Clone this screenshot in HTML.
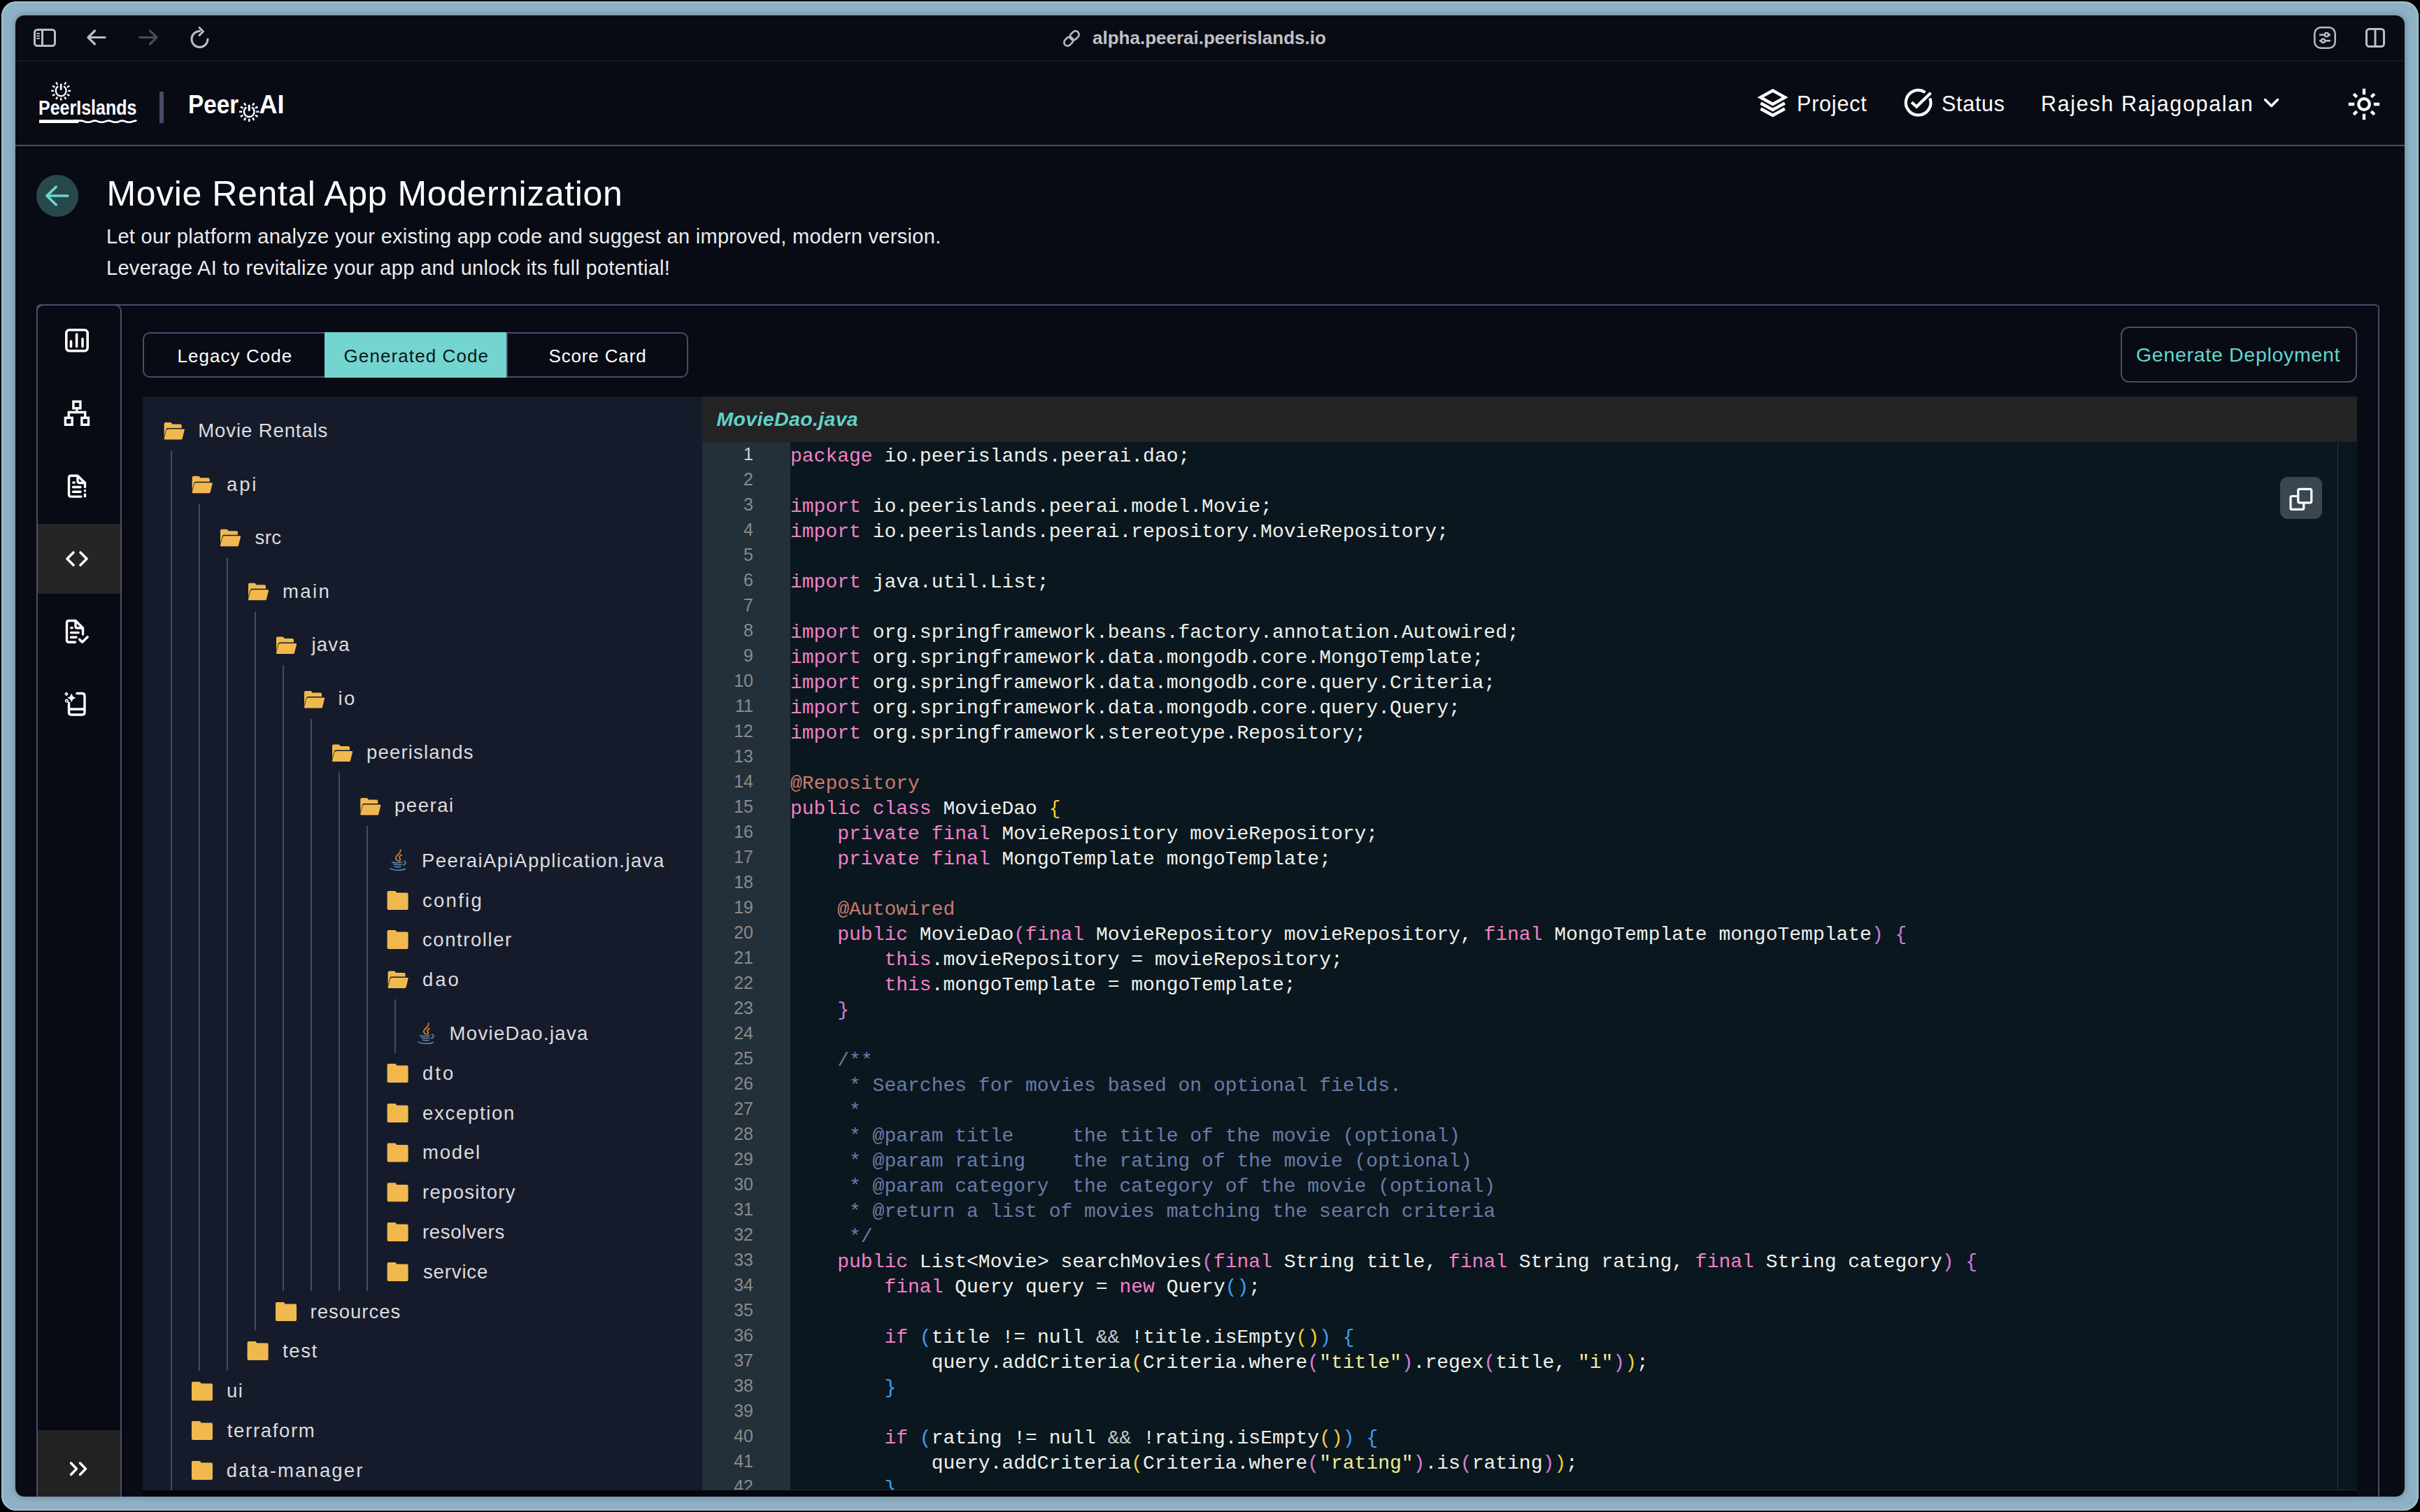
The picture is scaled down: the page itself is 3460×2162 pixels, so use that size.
<!DOCTYPE html>
<html><head><meta charset="utf-8">
<style>
*{margin:0;padding:0;box-sizing:border-box}
html,body{width:3460px;height:2162px;overflow:hidden;background:#000}
body{position:relative;font-family:"Liberation Sans",sans-serif}
.a{position:absolute}
.t{position:absolute;white-space:pre;line-height:1}
#frame{left:2px;top:2px;width:3456px;height:2158px;border-radius:21px;background:#8fb1c5;box-shadow:inset 0 0 0 1.5px rgba(220,240,250,.45)}
#win{left:22px;top:22px;width:3416px;height:2118px;border-radius:13px;background:#080b14;overflow:hidden;box-shadow:0 0 8px 1px rgba(40,60,80,.35)}
svg.ov{position:absolute;left:0;top:0;width:3460px;height:2162px;overflow:visible}
.kw{color:#f47fc8}.an{color:#cc7a6c}.cm{color:#6b7ba8}.st{color:#f0ee94}.q{color:#f0ee9e}.op{color:#c8c8c8}
#code{position:absolute;left:1129px;top:632px;font-family:"Liberation Mono",monospace;font-size:28px;line-height:36px;color:#f0f0ea;white-space:pre}
#gut{position:absolute;left:1004px;top:632px;width:73px;font-family:"Liberation Sans",sans-serif;font-size:25px;line-height:36px;color:#8a8a8a;white-space:pre;text-align:right}
.tr{position:absolute;white-space:pre;line-height:1;font-size:27.5px;color:#dcdcde}
</style></head><body>
<div id="frame" class="a"></div>
<div id="win" class="a">
</div>
<!-- everything positioned in page coordinates; clip container -->
<div class="a" style="left:22px;top:22px;width:3416px;height:2118px;border-radius:13px;overflow:hidden">
<div class="a" style="left:-22px;top:-22px;width:3460px;height:2162px">

<!-- toolbar separator -->
<div class="a" style="left:22px;top:86px;width:3416px;height:2px;background:#151720"></div>
<!-- header bottom border -->
<div class="a" style="left:22px;top:207px;width:3416px;height:2px;background:#4a4d6a"></div>

<!-- URL -->
<div class="t" style="left:1562px;top:41px;font-size:26px;font-weight:bold;color:#c0c0c4">alpha.peerai.peerislands.io</div>

<!-- logo text -->
<div class="t" style="left:55px;top:139px;font-size:29.6px;font-weight:bold;color:#fff;transform:scaleX(0.845);transform-origin:0 0">PeerIslands</div>
<div class="a" style="left:228px;top:131px;width:6px;height:45px;background:#484a68"></div>
<div class="t" style="left:268.5px;top:132.2px;font-size:36px;font-weight:bold;color:#fff;transform:scaleX(0.925);transform-origin:0 0">Peer</div>
<div class="t" style="left:370.5px;top:132.2px;font-size:36px;font-weight:bold;color:#fff">AI</div>

<!-- header right -->
<div class="t" style="left:2569px;top:132.5px;font-size:30.5px;color:#fff;letter-spacing:0.8px">Project</div>
<div class="t" style="left:2776px;top:132.5px;font-size:30.5px;color:#fff;letter-spacing:0.7px">Status</div>
<div class="t" style="left:2918px;top:132.5px;font-size:30.5px;color:#fff;letter-spacing:1.65px">Rajesh Rajagopalan</div>

<!-- title -->
<div class="a" style="left:52px;top:250px;width:60px;height:60px;border-radius:50%;background:#27494c"></div>
<div class="t" style="left:152.5px;top:252px;font-size:50px;color:#fff;letter-spacing:0.6px">Movie Rental App Modernization</div>
<div class="t" style="left:152px;top:323.5px;font-size:29px;color:#ececec;letter-spacing:0.3px">Let our platform analyze your existing app code and suggest an improved, modern version.</div>
<div class="t" style="left:152px;top:369px;font-size:29px;color:#ececec;letter-spacing:0.3px">Leverage AI to revitalize your app and unlock its full potential!</div>

<!-- main panel -->
<div class="a" style="left:52px;top:435px;width:3350px;height:1800px;border:2px solid #4a4d6a;border-radius:6px"></div>
<!-- sidebar -->
<div class="a" style="left:52px;top:435px;width:122px;height:1800px;border:2px solid #4a4d6a;border-radius:10px;background:#080b14"></div>
<div class="a" style="left:54px;top:749px;width:118px;height:100px;background:#252525"></div>
<div class="a" style="left:54px;top:2045px;width:118px;height:100px;background:#222222"></div>

<!-- tabs -->
<div class="a" style="left:204px;top:475px;width:780px;height:65px;border:2px solid #4a4d6a;border-radius:10px"></div>
<div class="a" style="left:464px;top:475px;width:260px;height:65px;background:#74d5d0"></div>
<div class="t" style="left:253.5px;top:495.5px;font-size:26px;color:#fff;letter-spacing:1.05px">Legacy Code</div>
<div class="t" style="left:491.5px;top:495.5px;font-size:26px;color:#0d1719;letter-spacing:1.1px">Generated Code</div>
<div class="t" style="left:784.5px;top:495.5px;font-size:26px;color:#fff;letter-spacing:0.85px">Score Card</div>
<div class="a" style="left:724px;top:475px;width:2px;height:65px;background:#4a4d6a"></div>

<!-- generate deployment -->
<div class="a" style="left:3032px;top:467px;width:338px;height:80px;border:2px solid #4a4d6a;border-radius:12px"></div>
<div class="t" style="left:3054px;top:493px;font-size:28.5px;color:#66d5cc;letter-spacing:0.7px">Generate Deployment</div>

<!-- tree panel -->
<div class="a" style="left:204px;top:567px;width:800px;height:1564px;background:#161b2b"></div>

<!-- code panel -->
<div class="a" style="left:1004px;top:567px;width:2366px;height:65px;background:#232323"></div>
<div class="t" style="left:1024.5px;top:585px;font-size:28.5px;font-weight:bold;font-style:italic;color:#62d2c9;letter-spacing:0.35px">MovieDao.java</div>
<div class="a" style="left:1004px;top:632px;width:2366px;height:1498px;background:#0a171f;overflow:hidden">
  <div class="a" style="left:0;top:0;width:126px;height:1498px;background:#232f39"></div>
  <div class="a" style="left:2338px;top:0;width:1px;height:1498px;background:#2a333d"></div>
  <div id="gut" style="left:0;top:-1px"><span style="color:#cfcfcf">1</span>
2
3
4
5
6
7
8
9
10
11
12
13
14
15
16
17
18
19
20
21
22
23
24
25
26
27
28
29
30
31
32
33
34
35
36
37
38
39
40
41
42</div>
  <div id="code" style="left:126px;top:3px"><span class="kw">package</span> io.peerislands.peerai.dao;

<span class="kw">import</span> io.peerislands.peerai.model.Movie;
<span class="kw">import</span> io.peerislands.peerai.repository.MovieRepository;

<span class="kw">import</span> java.util.List;

<span class="kw">import</span> org.springframework.beans.factory.annotation.Autowired;
<span class="kw">import</span> org.springframework.data.mongodb.core.MongoTemplate;
<span class="kw">import</span> org.springframework.data.mongodb.core.query.Criteria;
<span class="kw">import</span> org.springframework.data.mongodb.core.query.Query;
<span class="kw">import</span> org.springframework.stereotype.Repository;

<span class="an">@Repository</span>
<span class="kw">public</span> <span class="kw">class</span> MovieDao <span style="color:#f6cf3c">{</span>
    <span class="kw">private</span> <span class="kw">final</span> MovieRepository movieRepository;
    <span class="kw">private</span> <span class="kw">final</span> MongoTemplate mongoTemplate;

    <span class="an">@Autowired</span>
    <span class="kw">public</span> MovieDao<span style="color:#d57bdd">(</span><span class="kw">final</span> MovieRepository movieRepository, <span class="kw">final</span> MongoTemplate mongoTemplate<span style="color:#d57bdd">)</span> <span style="color:#d57bdd">{</span>
        <span class="kw">this</span>.movieRepository = movieRepository;
        <span class="kw">this</span>.mongoTemplate = mongoTemplate;
    <span style="color:#d57bdd">}</span>

<span class="cm">    /**</span>
<span class="cm">     * Searches for movies based on optional fields.</span>
<span class="cm">     *</span>
<span class="cm">     * @param title     the title of the movie (optional)</span>
<span class="cm">     * @param rating    the rating of the movie (optional)</span>
<span class="cm">     * @param category  the category of the movie (optional)</span>
<span class="cm">     * @return a list of movies matching the search criteria</span>
<span class="cm">     */</span>
    <span class="kw">public</span> List&lt;Movie&gt; searchMovies<span style="color:#d57bdd">(</span><span class="kw">final</span> String title, <span class="kw">final</span> String rating, <span class="kw">final</span> String category<span style="color:#d57bdd">)</span> <span style="color:#d57bdd">{</span>
        <span class="kw">final</span> Query query = <span class="kw">new</span> Query<span style="color:#3f9ff6">(</span><span style="color:#3f9ff6">)</span>;

        <span class="kw">if</span> <span style="color:#3f9ff6">(</span>title != null <span class="op">&amp;</span><span class="op">&amp;</span> !title.isEmpty<span style="color:#f6cf3c">(</span><span style="color:#f6cf3c">)</span><span style="color:#3f9ff6">)</span> <span style="color:#3f9ff6">{</span>
            query.addCriteria<span style="color:#f6cf3c">(</span>Criteria.where<span style="color:#d57bdd">(</span><span class="q">"</span><span class="st">title</span><span class="q">"</span><span style="color:#d57bdd">)</span>.regex<span style="color:#d57bdd">(</span>title, <span class="q">"</span><span class="st">i</span><span class="q">"</span><span style="color:#d57bdd">)</span><span style="color:#f6cf3c">)</span>;
        <span style="color:#3f9ff6">}</span>

        <span class="kw">if</span> <span style="color:#3f9ff6">(</span>rating != null <span class="op">&amp;</span><span class="op">&amp;</span> !rating.isEmpty<span style="color:#f6cf3c">(</span><span style="color:#f6cf3c">)</span><span style="color:#3f9ff6">)</span> <span style="color:#3f9ff6">{</span>
            query.addCriteria<span style="color:#f6cf3c">(</span>Criteria.where<span style="color:#d57bdd">(</span><span class="q">"</span><span class="st">rating</span><span class="q">"</span><span style="color:#d57bdd">)</span>.is<span style="color:#d57bdd">(</span>rating<span style="color:#d57bdd">)</span><span style="color:#f6cf3c">)</span>;
        <span style="color:#3f9ff6">}</span></div>
</div>
<div class="a" style="left:1004px;top:2130px;width:2366px;height:1px;background:#2a2d38"></div>
<div class="a" style="left:204px;top:2131px;width:3166px;height:10px;background:#05070e"></div>

<!-- copy button -->
<div class="a" style="left:3260px;top:682px;width:60px;height:60px;border-radius:11px;background:#3a4650"></div>

<!-- TREE -->
<div class="tr" style="left:283.3px;top:602.2px;letter-spacing:0.90px">Movie Rentals</div>
<div class="tr" style="left:324.0px;top:678.7px;letter-spacing:2.86px">api</div>
<div class="tr" style="left:364.6px;top:755.2px;letter-spacing:0.40px">src</div>
<div class="tr" style="left:404.0px;top:831.7px;letter-spacing:2.36px">main</div>
<div class="tr" style="left:445.6px;top:908.2px;letter-spacing:1.15px">java</div>
<div class="tr" style="left:483.6px;top:985.2px;letter-spacing:2.29px">io</div>
<div class="tr" style="left:524.0px;top:1061.7px;letter-spacing:1.18px">peerislands</div>
<div class="tr" style="left:564.0px;top:1138.2px;letter-spacing:1.53px">peerai</div>
<div class="tr" style="left:603.0px;top:1216.7px;letter-spacing:1.43px">PeeraiApiApplication.java</div>
<div class="tr" style="left:604.0px;top:1274.2px;letter-spacing:2.28px">config</div>
<div class="tr" style="left:604.0px;top:1329.7px;letter-spacing:1.56px">controller</div>
<div class="tr" style="left:604.0px;top:1387.4px;letter-spacing:2.91px">dao</div>
<div class="tr" style="left:642.6px;top:1463.5px;letter-spacing:1.32px">MovieDao.java</div>
<div class="tr" style="left:604.0px;top:1520.7px;letter-spacing:3.03px">dto</div>
<div class="tr" style="left:604.0px;top:1577.7px;letter-spacing:1.70px">exception</div>
<div class="tr" style="left:604.0px;top:1634.2px;letter-spacing:1.80px">model</div>
<div class="tr" style="left:604.0px;top:1691.0px;letter-spacing:1.31px">repository</div>
<div class="tr" style="left:604.0px;top:1747.7px;letter-spacing:0.70px">resolvers</div>
<div class="tr" style="left:605.0px;top:1804.7px;letter-spacing:0.86px">service</div>
<div class="tr" style="left:443.6px;top:1861.7px;letter-spacing:0.98px">resources</div>
<div class="tr" style="left:404.0px;top:1917.7px;letter-spacing:1.64px">test</div>
<div class="tr" style="left:324.0px;top:1975.4px;letter-spacing:1.51px">ui</div>
<div class="tr" style="left:324.8px;top:2031.7px;letter-spacing:1.67px">terraform</div>
<div class="tr" style="left:323.8px;top:2088.7px;letter-spacing:2.12px">data-manager</div>

<!-- icons overlay -->
<svg class="ov" viewBox="0 0 3460 2162">
<g fill="none" stroke="#bdbdc1" stroke-width="3"><rect x="49.5" y="42.5" width="29" height="23" rx="4"/><line x1="60.5" y1="43" x2="60.5" y2="65"/></g>
<g stroke="#bdbdc1" stroke-width="2" stroke-linecap="round"><line x1="53" y1="48" x2="56" y2="48"/><line x1="53" y1="51.5" x2="56" y2="51.5"/><line x1="53" y1="55" x2="56" y2="55"/></g>
<g fill="none" stroke="#bdbdc1" stroke-width="3.2" stroke-linecap="round" stroke-linejoin="round"><path d="M135.5 44 L126 53.5 L135.5 63 M126.5 53.5 H150"/></g>
<g fill="none" stroke="#4a4c55" stroke-width="3.2" stroke-linecap="round" stroke-linejoin="round"><path d="M214.5 44 L224 53.5 L214.5 63 M223.5 53.5 H200"/></g>
<g fill="none" stroke="#bdbdc1" stroke-width="3" stroke-linecap="round" stroke-linejoin="round"><path d="M297 56 A11.5 11.5 0 1 1 285.5 44.5"/><path d="M285 39.5 L290.5 45 L285 50.5"/></g>
<g fill="none" stroke="#bdbdc1" stroke-width="2.6" stroke-linecap="round" transform="translate(1532 55) rotate(-45)"><rect x="-13" y="-5" width="14" height="10" rx="5"/><rect x="-1" y="-5" width="14" height="10" rx="5"/></g>
<g fill="none" stroke="#bdbdc1" stroke-width="2.5"><rect x="3309.3" y="39.3" width="29.4" height="29.4" rx="9"/><line x1="3316" y1="49.7" x2="3323.5" y2="49.7"/><line x1="3329.5" y1="49.7" x2="3332" y2="49.7"/><circle cx="3326.5" cy="49.7" r="2.6"/><line x1="3316" y1="58.3" x2="3318.5" y2="58.3"/><line x1="3324.5" y1="58.3" x2="3332" y2="58.3"/><circle cx="3321.5" cy="58.3" r="2.6"/></g>
<g fill="none" stroke="#bdbdc1" stroke-width="3"><rect x="3383.5" y="41.5" width="25" height="25" rx="4"/><line x1="3396" y1="42" x2="3396" y2="66"/></g>
<g stroke="#fff" stroke-width="2.3" fill="none" stroke-linecap="butt"><path d="M91.03 123.35 A7.5 7.5 0 1 1 83.38 123.35"/><line x1="87.2" y1="119.80000000000001" x2="87.2" y2="128.8" stroke-width="2.6449999999999996"/><line x1="92.30" y1="120.97" x2="94.20" y2="117.68"/><line x1="96.03" y1="124.70" x2="99.32" y2="122.80"/><line x1="97.40" y1="129.80" x2="101.20" y2="129.80"/><line x1="96.03" y1="134.90" x2="99.32" y2="136.80"/><line x1="92.30" y1="138.63" x2="94.20" y2="141.92"/><line x1="87.20" y1="140.00" x2="87.20" y2="143.80"/><line x1="82.10" y1="138.63" x2="80.20" y2="141.92"/><line x1="78.37" y1="134.90" x2="75.08" y2="136.80"/><line x1="77.00" y1="129.80" x2="73.20" y2="129.80"/><line x1="78.37" y1="124.70" x2="75.08" y2="122.80"/><line x1="82.10" y1="120.97" x2="80.20" y2="117.68"/></g>
<g stroke="#fff" stroke-width="2.5" fill="none" stroke-linecap="butt"><path d="M359.97 153.34 A7.4 7.4 0 1 1 352.43 153.34"/><line x1="356.2" y1="149.79999999999998" x2="356.2" y2="158.7" stroke-width="2.875"/><line x1="361.25" y1="150.95" x2="363.30" y2="147.40"/><line x1="364.95" y1="154.65" x2="368.50" y2="152.60"/><line x1="366.30" y1="159.70" x2="370.40" y2="159.70"/><line x1="364.95" y1="164.75" x2="368.50" y2="166.80"/><line x1="361.25" y1="168.45" x2="363.30" y2="172.00"/><line x1="356.20" y1="169.80" x2="356.20" y2="173.90"/><line x1="351.15" y1="168.45" x2="349.10" y2="172.00"/><line x1="347.45" y1="164.75" x2="343.90" y2="166.80"/><line x1="346.10" y1="159.70" x2="342.00" y2="159.70"/><line x1="347.45" y1="154.65" x2="343.90" y2="152.60"/><line x1="351.15" y1="150.95" x2="349.10" y2="147.40"/></g>
<path d="M56 171.2 H105 C109 171.2 111 171.2 114 171.5 L112 176.1 H56 Z" fill="#fff"/>
<path d="M106 172.6 C109 172.6 111 172.6 116 172.6 C119.5 172.6 122 174.8 125.8 174.8 C129.6 174.8 132 172.6 135.6 172.6 C139.1 172.6 141.6 174.8 145.4 174.8 C149.2 174.8 151.6 172.6 155.2 172.6 C158.7 172.6 161.2 174.8 165.0 174.8 C168.79999999999998 174.8 171.2 172.6 174.79999999999998 172.6 C178.29999999999998 172.6 180.79999999999998 174.8 184.6 174.8 C188.39999999999998 174.8 190.79999999999998 172.6 194.39999999999998 172.6" stroke="#fff" stroke-width="2.6" fill="none" stroke-linecap="round"/>
<g fill="none" stroke="#fff" stroke-width="4.4" stroke-linejoin="miter"><path d="M2534.6 129.5 L2552.1 139.2 L2534.6 148.9 L2517.1 139.2 Z"/><path d="M2517.4 147.5 L2534.6 157 L2551.8 147.5"/><path d="M2517.4 155.5 L2534.6 165 L2551.8 155.5"/></g>
<g fill="none" stroke="#fff" stroke-width="4.2"><path d="M2759.3 140.4 A17.8 17.8 0 1 1 2752.5 131.9"/><path d="M2733.2 146.2 L2740.2 152.6 L2760.6 132.8" stroke-linecap="butt"/></g>
<g fill="none" stroke="#fff" stroke-width="3.5" stroke-linecap="round" stroke-linejoin="round"><path d="M3238.5 142.5 L3247.5 151.5 L3256.5 142.5"/></g>
<g stroke="#fff" stroke-width="4.3" fill="none"><circle cx="3380" cy="149" r="7.8"/><line x1="3380.00" y1="135.20" x2="3380.00" y2="126.80"/><line x1="3390.25" y1="138.75" x2="3394.85" y2="134.15"/><line x1="3393.80" y1="149.00" x2="3402.20" y2="149.00"/><line x1="3390.25" y1="159.25" x2="3394.85" y2="163.85"/><line x1="3380.00" y1="162.80" x2="3380.00" y2="171.20"/><line x1="3369.75" y1="159.25" x2="3365.15" y2="163.85"/><line x1="3366.20" y1="149.00" x2="3357.80" y2="149.00"/><line x1="3369.75" y1="138.75" x2="3365.15" y2="134.15"/></g>
<g fill="none" stroke="#6cd9cd" stroke-width="3.6" stroke-linecap="round" stroke-linejoin="round"><path d="M80.2 267.2 L67 280 L80.2 292.8 M67.5 280 H96.8"/></g>
<g fill="none" stroke="#fff" stroke-width="3.6" stroke-linecap="round"><rect x="94.8" y="471.8" width="30.4" height="30" rx="4.5"/><line x1="101.5" y1="488" x2="101.5" y2="495.5"/><line x1="109.6" y1="478" x2="109.6" y2="495.5"/><line x1="118" y1="484.5" x2="118" y2="495.5"/></g>
<g fill="none" stroke="#fff" stroke-width="3.4"><rect x="104.9" y="574.2" width="10" height="9.6"/><rect x="93.4" y="597.4" width="9.8" height="9.9"/><rect x="116.9" y="597.4" width="9.6" height="9.9"/><path d="M109.8 585.5 V589.5 M98.3 597 V589.5 H121.7 V597"/></g>
<g fill="none" stroke="#fff" stroke-width="3.4" stroke-linecap="round" stroke-linejoin="round"><path d="M116 710.1 H101.5 Q98.5 710.1 98.5 707.1 V683.3 Q98.5 680.3 101.5 680.3 H111 L121.5 690.5 V696.5"/><path d="M111 680.8 V687.5 Q111 690.5 114 690.5 H121"/><line x1="104.8" y1="690" x2="106.2" y2="690"/><line x1="104.5" y1="696.5" x2="115" y2="696.5"/><line x1="104.5" y1="703.2" x2="115" y2="703.2"/><line x1="121.5" y1="701.5" x2="121.5" y2="701.8"/><line x1="121.5" y1="707" x2="121.5" y2="709.8"/></g>
<g fill="none" stroke="#fff" stroke-width="3.6" stroke-linecap="round" stroke-linejoin="round"><path d="M105 790 L96 799 L105 808 M115 790 L124 799 L115 808"/></g>
<g fill="none" stroke="#fff" stroke-width="3.4" stroke-linecap="round" stroke-linejoin="round"><path d="M107.5 918.2 H98.5 Q95.5 918.2 95.5 915.2 V890.5 Q95.5 887.5 98.5 887.5 H108 L118.5 898 V907"/><path d="M108 888 V895.5 Q108 898 110.5 898 H118"/><line x1="101.8" y1="897.8" x2="103.2" y2="897.8"/><line x1="101.5" y1="904.6" x2="112.3" y2="904.6"/><line x1="101.5" y1="911.3" x2="109" y2="911.3"/><path d="M113.6 914.3 L117.6 918.2 L125.2 910.8"/></g>
<g fill="none" stroke="#fff" stroke-width="3.4" stroke-linecap="round" stroke-linejoin="round"><path d="M110 991.5 H117.5 Q121 991.5 121 995 V1018.5 Q121 1022 117.5 1022 H102 Q98.5 1022 98.5 1018.5 V1005"/><line x1="99" y1="1014" x2="120.5" y2="1014"/></g>
<path d="M102.3 992.5 Q103.1 997 107.3 997.8 Q103.1 998.6 102.3 1003 Q101.5 998.6 97.3 997.8 Q101.5 997 102.3 992.5 Z" fill="#fff" stroke="#fff" stroke-width="1.2" stroke-linejoin="round"/>
<g fill="none" stroke="#fff" stroke-width="1.6"><path d="M95 990.5 L96.8 992.3 L95 994.1 L93.2 992.3 Z"/><circle cx="95.4" cy="1002" r="1.7"/></g>
<g fill="none" stroke="#fff" stroke-width="3.4" stroke-linecap="round" stroke-linejoin="round"><path d="M101.5 2092 L109.5 2100.2 L101.5 2108.5 M114.5 2092 L122.5 2100.2 L114.5 2108.5"/></g>
<g fill="none" stroke="#fff" stroke-width="3.2" stroke-linejoin="round"><rect x="3285.8" y="699.3" width="19" height="19.5" rx="2"/><path d="M3284 709.5 H3276.8 Q3275 709.5 3275 711.3 V726.5 Q3275 728.3 3276.8 728.3 H3292 Q3293.8 728.3 3293.8 726.5 V720"/></g>
<g transform="translate(233.7,604)"><path d="M1 2 Q1 0 3 0 H10 Q11.5 0 12 1.5 L12.5 2.5 H24 Q26 2.5 26 4.5 V8 H6 Q4.5 8 4 9.5 L1 20 Z" fill="#f1b94d"/><path d="M6.5 9.5 H29 Q30.5 9.5 30 11 L27 23 Q26.6 24.5 25 24.5 H2.5 Q0.6 24.5 1 22.6 L4.3 11 Q4.8 9.5 6.5 9.5 Z" fill="#f1b94d"/></g>
<g transform="translate(273.7,680.7)"><path d="M1 2 Q1 0 3 0 H10 Q11.5 0 12 1.5 L12.5 2.5 H24 Q26 2.5 26 4.5 V8 H6 Q4.5 8 4 9.5 L1 20 Z" fill="#f1b94d"/><path d="M6.5 9.5 H29 Q30.5 9.5 30 11 L27 23 Q26.6 24.5 25 24.5 H2.5 Q0.6 24.5 1 22.6 L4.3 11 Q4.8 9.5 6.5 9.5 Z" fill="#f1b94d"/></g>
<g transform="translate(314,756.8)"><path d="M1 2 Q1 0 3 0 H10 Q11.5 0 12 1.5 L12.5 2.5 H24 Q26 2.5 26 4.5 V8 H6 Q4.5 8 4 9.5 L1 20 Z" fill="#f1b94d"/><path d="M6.5 9.5 H29 Q30.5 9.5 30 11 L27 23 Q26.6 24.5 25 24.5 H2.5 Q0.6 24.5 1 22.6 L4.3 11 Q4.8 9.5 6.5 9.5 Z" fill="#f1b94d"/></g>
<g transform="translate(354,833.8)"><path d="M1 2 Q1 0 3 0 H10 Q11.5 0 12 1.5 L12.5 2.5 H24 Q26 2.5 26 4.5 V8 H6 Q4.5 8 4 9.5 L1 20 Z" fill="#f1b94d"/><path d="M6.5 9.5 H29 Q30.5 9.5 30 11 L27 23 Q26.6 24.5 25 24.5 H2.5 Q0.6 24.5 1 22.6 L4.3 11 Q4.8 9.5 6.5 9.5 Z" fill="#f1b94d"/></g>
<g transform="translate(394,910.5)"><path d="M1 2 Q1 0 3 0 H10 Q11.5 0 12 1.5 L12.5 2.5 H24 Q26 2.5 26 4.5 V8 H6 Q4.5 8 4 9.5 L1 20 Z" fill="#f1b94d"/><path d="M6.5 9.5 H29 Q30.5 9.5 30 11 L27 23 Q26.6 24.5 25 24.5 H2.5 Q0.6 24.5 1 22.6 L4.3 11 Q4.8 9.5 6.5 9.5 Z" fill="#f1b94d"/></g>
<g transform="translate(434,988)"><path d="M1 2 Q1 0 3 0 H10 Q11.5 0 12 1.5 L12.5 2.5 H24 Q26 2.5 26 4.5 V8 H6 Q4.5 8 4 9.5 L1 20 Z" fill="#f1b94d"/><path d="M6.5 9.5 H29 Q30.5 9.5 30 11 L27 23 Q26.6 24.5 25 24.5 H2.5 Q0.6 24.5 1 22.6 L4.3 11 Q4.8 9.5 6.5 9.5 Z" fill="#f1b94d"/></g>
<g transform="translate(474,1064.6)"><path d="M1 2 Q1 0 3 0 H10 Q11.5 0 12 1.5 L12.5 2.5 H24 Q26 2.5 26 4.5 V8 H6 Q4.5 8 4 9.5 L1 20 Z" fill="#f1b94d"/><path d="M6.5 9.5 H29 Q30.5 9.5 30 11 L27 23 Q26.6 24.5 25 24.5 H2.5 Q0.6 24.5 1 22.6 L4.3 11 Q4.8 9.5 6.5 9.5 Z" fill="#f1b94d"/></g>
<g transform="translate(514.3,1141)"><path d="M1 2 Q1 0 3 0 H10 Q11.5 0 12 1.5 L12.5 2.5 H24 Q26 2.5 26 4.5 V8 H6 Q4.5 8 4 9.5 L1 20 Z" fill="#f1b94d"/><path d="M6.5 9.5 H29 Q30.5 9.5 30 11 L27 23 Q26.6 24.5 25 24.5 H2.5 Q0.6 24.5 1 22.6 L4.3 11 Q4.8 9.5 6.5 9.5 Z" fill="#f1b94d"/></g>
<g transform="translate(557,1214)" fill="none" stroke-linecap="round"><path d="M15.6 1 C16.5 5 13 7 10.2 10 C7.8 12.5 9 15 11.5 16.8 M17 8.6 C14 9.5 13.5 11.5 14.8 13.5 C15.8 15 14.8 16.5 13.5 17.5" stroke="#e8812a" stroke-width="1.7"/><path d="M3.5 19 C8 19.9 14 19.9 17.7 19 M20.5 17.3 C23.5 17.5 23.8 21.5 19.5 22.8 M6 21.6 C9 22.8 14 22.8 16.8 22.3 M7 25.1 C10 26 13.5 26 15.9 25.4 M1 27.8 C4 30.5 17 31.5 22.5 28.5" stroke="#5f8db5" stroke-width="1.5"/></g>
<g transform="translate(553.6,1274)"><path d="M0 2 Q0 0 2 0 H11 Q12.5 0 13 1.5 L13.6 2.6 H28 Q30 2.6 30 4.6 V25 Q30 27 28 27 H2 Q0 27 0 25 Z" fill="#f1b94d"/></g>
<g transform="translate(553.6,1330)"><path d="M0 2 Q0 0 2 0 H11 Q12.5 0 13 1.5 L13.6 2.6 H28 Q30 2.6 30 4.6 V25 Q30 27 28 27 H2 Q0 27 0 25 Z" fill="#f1b94d"/></g>
<g transform="translate(553.6,1388.6)"><path d="M1 2 Q1 0 3 0 H10 Q11.5 0 12 1.5 L12.5 2.5 H24 Q26 2.5 26 4.5 V8 H6 Q4.5 8 4 9.5 L1 20 Z" fill="#f1b94d"/><path d="M6.5 9.5 H29 Q30.5 9.5 30 11 L27 23 Q26.6 24.5 25 24.5 H2.5 Q0.6 24.5 1 22.6 L4.3 11 Q4.8 9.5 6.5 9.5 Z" fill="#f1b94d"/></g>
<g transform="translate(597,1462)" fill="none" stroke-linecap="round"><path d="M15.6 1 C16.5 5 13 7 10.2 10 C7.8 12.5 9 15 11.5 16.8 M17 8.6 C14 9.5 13.5 11.5 14.8 13.5 C15.8 15 14.8 16.5 13.5 17.5" stroke="#e8812a" stroke-width="1.7"/><path d="M3.5 19 C8 19.9 14 19.9 17.7 19 M20.5 17.3 C23.5 17.5 23.8 21.5 19.5 22.8 M6 21.6 C9 22.8 14 22.8 16.8 22.3 M7 25.1 C10 26 13.5 26 15.9 25.4 M1 27.8 C4 30.5 17 31.5 22.5 28.5" stroke="#5f8db5" stroke-width="1.5"/></g>
<g transform="translate(553.6,1521)"><path d="M0 2 Q0 0 2 0 H11 Q12.5 0 13 1.5 L13.6 2.6 H28 Q30 2.6 30 4.6 V25 Q30 27 28 27 H2 Q0 27 0 25 Z" fill="#f1b94d"/></g>
<g transform="translate(553.6,1578)"><path d="M0 2 Q0 0 2 0 H11 Q12.5 0 13 1.5 L13.6 2.6 H28 Q30 2.6 30 4.6 V25 Q30 27 28 27 H2 Q0 27 0 25 Z" fill="#f1b94d"/></g>
<g transform="translate(553.6,1634.5)"><path d="M0 2 Q0 0 2 0 H11 Q12.5 0 13 1.5 L13.6 2.6 H28 Q30 2.6 30 4.6 V25 Q30 27 28 27 H2 Q0 27 0 25 Z" fill="#f1b94d"/></g>
<g transform="translate(553.6,1691.3)"><path d="M0 2 Q0 0 2 0 H11 Q12.5 0 13 1.5 L13.6 2.6 H28 Q30 2.6 30 4.6 V25 Q30 27 28 27 H2 Q0 27 0 25 Z" fill="#f1b94d"/></g>
<g transform="translate(553.6,1748)"><path d="M0 2 Q0 0 2 0 H11 Q12.5 0 13 1.5 L13.6 2.6 H28 Q30 2.6 30 4.6 V25 Q30 27 28 27 H2 Q0 27 0 25 Z" fill="#f1b94d"/></g>
<g transform="translate(553.6,1805)"><path d="M0 2 Q0 0 2 0 H11 Q12.5 0 13 1.5 L13.6 2.6 H28 Q30 2.6 30 4.6 V25 Q30 27 28 27 H2 Q0 27 0 25 Z" fill="#f1b94d"/></g>
<g transform="translate(394,1862)"><path d="M0 2 Q0 0 2 0 H11 Q12.5 0 13 1.5 L13.6 2.6 H28 Q30 2.6 30 4.6 V25 Q30 27 28 27 H2 Q0 27 0 25 Z" fill="#f1b94d"/></g>
<g transform="translate(353.6,1918)"><path d="M0 2 Q0 0 2 0 H11 Q12.5 0 13 1.5 L13.6 2.6 H28 Q30 2.6 30 4.6 V25 Q30 27 28 27 H2 Q0 27 0 25 Z" fill="#f1b94d"/></g>
<g transform="translate(274,1975.7)"><path d="M0 2 Q0 0 2 0 H11 Q12.5 0 13 1.5 L13.6 2.6 H28 Q30 2.6 30 4.6 V25 Q30 27 28 27 H2 Q0 27 0 25 Z" fill="#f1b94d"/></g>
<g transform="translate(274,2032)"><path d="M0 2 Q0 0 2 0 H11 Q12.5 0 13 1.5 L13.6 2.6 H28 Q30 2.6 30 4.6 V25 Q30 27 28 27 H2 Q0 27 0 25 Z" fill="#f1b94d"/></g>
<g transform="translate(274,2089)"><path d="M0 2 Q0 0 2 0 H11 Q12.5 0 13 1.5 L13.6 2.6 H28 Q30 2.6 30 4.6 V25 Q30 27 28 27 H2 Q0 27 0 25 Z" fill="#f1b94d"/></g>
<rect x="244" y="644.4" width="2" height="1486.6" fill="#464a66"/>
<rect x="284" y="721" width="2" height="1239" fill="#464a66"/>
<rect x="324" y="798" width="2" height="1162" fill="#464a66"/>
<rect x="364" y="874.8" width="2" height="1027.7" fill="#464a66"/>
<rect x="404" y="951" width="2" height="895" fill="#464a66"/>
<rect x="444" y="1028" width="2" height="818" fill="#464a66"/>
<rect x="484" y="1104.6" width="2" height="741.4000000000001" fill="#464a66"/>
<rect x="524" y="1181" width="2" height="665" fill="#464a66"/>
<rect x="564" y="1429" width="2" height="76.70000000000005" fill="#464a66"/>
</svg>

</div></div>
</body></html>
